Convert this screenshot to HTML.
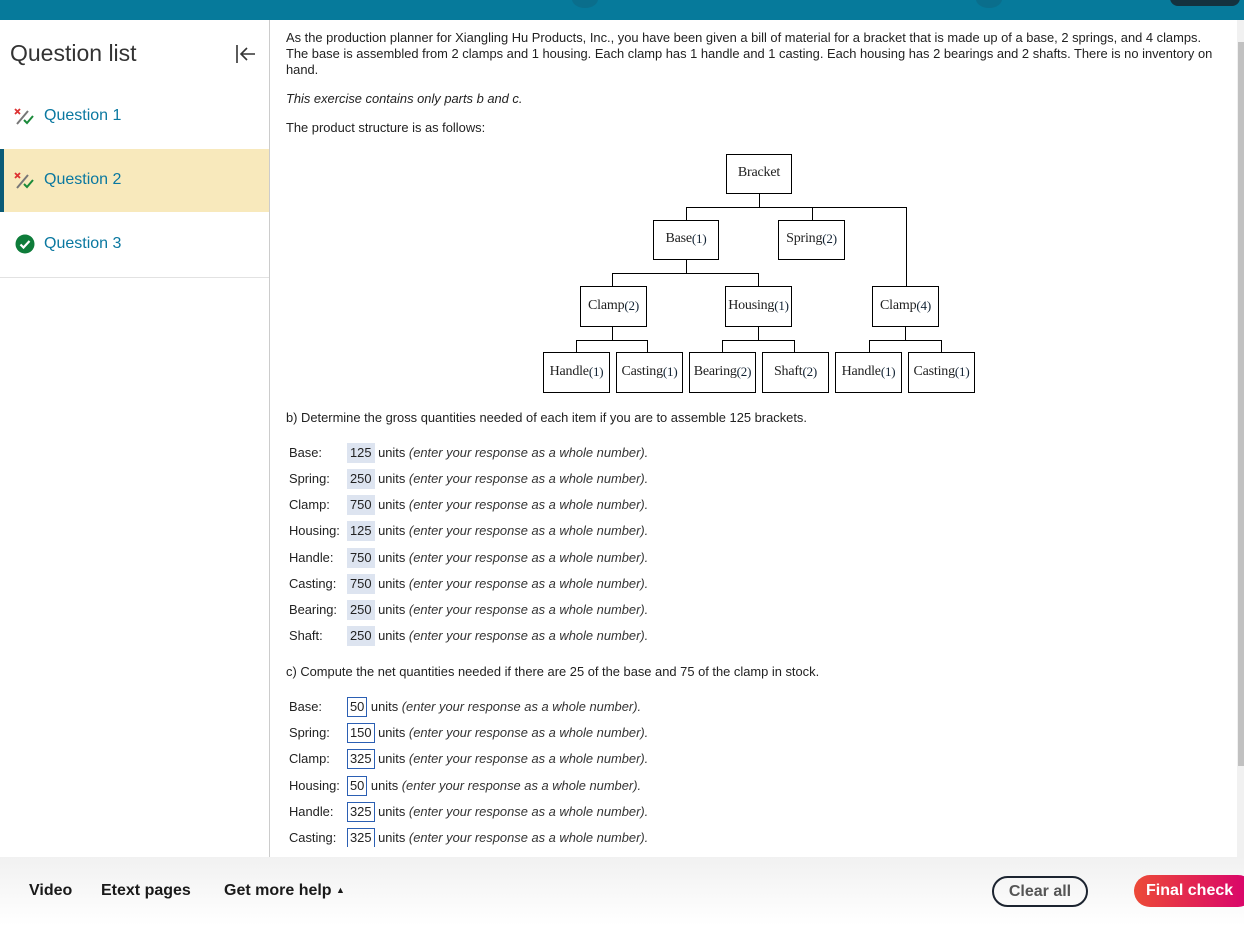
<!DOCTYPE html>
<html><head><meta charset="utf-8"><style>
*{margin:0;padding:0;box-sizing:border-box}
body{width:1244px;height:926px;overflow:hidden;background:#fff;font-family:"Liberation Sans",Arial,sans-serif;position:relative;color:#222}
.abs{position:absolute}
.top{left:0;top:0;width:1244px;height:20px;background:#067a9b}
.left{left:0;top:20px;width:270px;height:837px;border-right:1px solid #ccc;background:#fff}
.q{position:absolute;left:44px;font-size:16px;color:#0a78a0}
.t{font-size:12.9px;line-height:16px;color:#222;white-space:nowrap}
.box{position:absolute;border:1px solid #000;background:#fff;font-family:"Liberation Serif",serif;font-size:14px;display:flex;align-items:center;justify-content:center;padding-bottom:2px;white-space:nowrap;letter-spacing:-0.2px}
.box sub{font-size:13px;vertical-align:-5px;color:#123}
.ln{position:absolute;background:#000}
.row{position:absolute;left:289px;font-size:12.9px;height:20px;line-height:20px;white-space:nowrap}
.row .lb{display:inline-block;width:58px}
.row .in{display:inline-block;background:#dde4f0;padding:0 3px;height:20px;line-height:20px}
.row .bx{display:inline-block;border:1px solid #2b5fb3;padding:0 2px;height:20px;line-height:18px}
.row i{color:#333}
.foot{left:0;top:857px;width:1244px;height:69px;background:linear-gradient(#f1f1f1,#fff)}
.fl{position:absolute;top:882px;font-size:16px;font-weight:bold;color:#1a1a1a}
</style></head><body>
<div class="abs top"></div>
<div class="abs" style="left:572px;top:-10px;width:26px;height:18px;background:#0a6e8c;border-radius:50%"></div>
<div class="abs" style="left:976px;top:-10px;width:26px;height:18px;background:#0a6e8c;border-radius:50%"></div>
<div class="abs" style="left:1170px;top:-10px;width:70px;height:16px;background:#14323f;border-radius:8px"></div>
<div class="abs left">
 <div class="abs" style="left:10px;top:20px;font-size:23px;color:#333">Question list</div>
 <svg class="abs" style="left:234px;top:22px" width="24" height="24" viewBox="0 0 24 24"><path d="M3 3v18M21 12H7M13 6l-6 6 6 6" stroke="#333" stroke-width="1.6" fill="none"/></svg>
 <svg class="abs" style="left:13px;top:87px" width="22" height="20" viewBox="0 0 22 20"><path d="M2 2l5 5M7 2l-5 5" stroke="#d33" stroke-width="1.8"/><path d="M4 17L15 4" stroke="#777" stroke-width="2"/><path d="M11 13l3 3 6-7" stroke="#1a8a3a" stroke-width="2" fill="none"/></svg>
 <div class="q" style="top:87px">Question 1</div>
 <div class="abs" style="left:0;top:129px;width:269px;height:63px;background:#f8e9bc"></div>
 <div class="abs" style="left:0;top:129px;width:4px;height:63px;background:#0b5b77"></div>
 <svg class="abs" style="left:13px;top:151px" width="22" height="20" viewBox="0 0 22 20"><path d="M2 2l5 5M7 2l-5 5" stroke="#d33" stroke-width="1.8"/><path d="M4 17L15 4" stroke="#777" stroke-width="2"/><path d="M11 13l3 3 6-7" stroke="#1a8a3a" stroke-width="2" fill="none"/></svg>
 <div class="q" style="top:151px">Question 2</div>
 <svg class="abs" style="left:15px;top:214px" width="20" height="20" viewBox="0 0 20 20"><circle cx="10" cy="10" r="9.5" fill="#0e7c3a"/><path d="M5.5 10.5l3 3 6-6.5" stroke="#fff" stroke-width="2.2" fill="none"/></svg>
 <div class="q" style="top:215px">Question 3</div>
 <div class="abs" style="left:0;top:257px;width:269px;height:1px;background:#e2e2e2"></div>
</div>
<div class="abs" style="left:1237px;top:20px;width:7px;height:837px;background:#f1f1f1"></div>
<div class="abs" style="left:1238px;top:42px;width:6px;height:724px;background:#c1c1c1"></div>

<div class="abs t" style="left:286px;top:30px">As the production planner for Xiangling Hu Products, Inc., you have been given a bill of material for a bracket that is made up of a base, 2 springs, and 4 clamps.</div>
<div class="abs t" style="left:286px;top:46px">The base is assembled from 2 clamps and 1 housing. Each clamp has 1 handle and 1 casting. Each housing has 2 bearings and 2 shafts. There is no inventory on</div>
<div class="abs t" style="left:286px;top:62px">hand.</div>
<div class="abs t" style="left:286px;top:91px;font-style:italic">This exercise contains only parts b and c.</div>
<div class="abs t" style="left:286px;top:120px">The product structure is as follows:</div>

<!-- tree -->
<div class="ln" style="left:759px;top:194px;width:1px;height:13px"></div>
<div class="ln" style="left:686px;top:207px;width:221px;height:1px"></div>
<div class="ln" style="left:686px;top:207px;width:1px;height:13px"></div>
<div class="ln" style="left:812px;top:207px;width:1px;height:13px"></div>
<div class="ln" style="left:906px;top:207px;width:1px;height:79px"></div>
<div class="ln" style="left:686px;top:260px;width:1px;height:13px"></div>
<div class="ln" style="left:612px;top:273px;width:147px;height:1px"></div>
<div class="ln" style="left:612px;top:273px;width:1px;height:13px"></div>
<div class="ln" style="left:758px;top:273px;width:1px;height:13px"></div>
<div class="ln" style="left:612px;top:327px;width:1px;height:13px"></div>
<div class="ln" style="left:576px;top:340px;width:72px;height:1px"></div>
<div class="ln" style="left:576px;top:340px;width:1px;height:12px"></div>
<div class="ln" style="left:647px;top:340px;width:1px;height:12px"></div>
<div class="ln" style="left:758px;top:327px;width:1px;height:13px"></div>
<div class="ln" style="left:722px;top:340px;width:73px;height:1px"></div>
<div class="ln" style="left:722px;top:340px;width:1px;height:12px"></div>
<div class="ln" style="left:794px;top:340px;width:1px;height:12px"></div>
<div class="ln" style="left:905px;top:327px;width:1px;height:13px"></div>
<div class="ln" style="left:869px;top:340px;width:73px;height:1px"></div>
<div class="ln" style="left:869px;top:340px;width:1px;height:12px"></div>
<div class="ln" style="left:941px;top:340px;width:1px;height:12px"></div>
<div class="box" style="left:726px;top:154px;width:66px;height:40px">Bracket</div>
<div class="box" style="left:653px;top:220px;width:66px;height:40px">Base<sub>(1)</sub></div>
<div class="box" style="left:778px;top:220px;width:67px;height:40px">Spring<sub>(2)</sub></div>
<div class="box" style="left:580px;top:286px;width:67px;height:41px">Clamp<sub>(2)</sub></div>
<div class="box" style="left:725px;top:286px;width:67px;height:41px">Housing<sub>(1)</sub></div>
<div class="box" style="left:872px;top:286px;width:67px;height:41px">Clamp<sub>(4)</sub></div>
<div class="box" style="left:543px;top:352px;width:67px;height:41px">Handle<sub>(1)</sub></div>
<div class="box" style="left:616px;top:352px;width:67px;height:41px">Casting<sub>(1)</sub></div>
<div class="box" style="left:689px;top:352px;width:67px;height:41px">Bearing<sub>(2)</sub></div>
<div class="box" style="left:762px;top:352px;width:67px;height:41px">Shaft<sub>(2)</sub></div>
<div class="box" style="left:835px;top:352px;width:67px;height:41px">Handle<sub>(1)</sub></div>
<div class="box" style="left:908px;top:352px;width:67px;height:41px">Casting<sub>(1)</sub></div>

<div class="abs t" style="left:286px;top:410px">b) Determine the gross quantities needed of each item if you are to assemble 125 brackets.</div>
<div class="row" style="top:443px"><span class="lb">Base:</span><span class="in">125</span> units <i>(enter your response as a whole number).</i></div>
<div class="row" style="top:469px"><span class="lb">Spring:</span><span class="in">250</span> units <i>(enter your response as a whole number).</i></div>
<div class="row" style="top:495px"><span class="lb">Clamp:</span><span class="in">750</span> units <i>(enter your response as a whole number).</i></div>
<div class="row" style="top:521px"><span class="lb">Housing:</span><span class="in">125</span> units <i>(enter your response as a whole number).</i></div>
<div class="row" style="top:548px"><span class="lb">Handle:</span><span class="in">750</span> units <i>(enter your response as a whole number).</i></div>
<div class="row" style="top:574px"><span class="lb">Casting:</span><span class="in">750</span> units <i>(enter your response as a whole number).</i></div>
<div class="row" style="top:600px"><span class="lb">Bearing:</span><span class="in">250</span> units <i>(enter your response as a whole number).</i></div>
<div class="row" style="top:626px"><span class="lb">Shaft:</span><span class="in">250</span> units <i>(enter your response as a whole number).</i></div>

<div class="abs t" style="left:286px;top:664px">c) Compute the net quantities needed if there are 25 of the base and 75 of the clamp in stock.</div>
<div class="abs" style="left:270px;top:690px;width:967px;height:157px;overflow:hidden">
<div class="row" style="left:19px;top:7px"><span class="lb">Base:</span><span class="bx">50</span> units <i>(enter your response as a whole number).</i></div>
<div class="row" style="left:19px;top:33px"><span class="lb">Spring:</span><span class="bx">150</span> units <i>(enter your response as a whole number).</i></div>
<div class="row" style="left:19px;top:59px"><span class="lb">Clamp:</span><span class="bx">325</span> units <i>(enter your response as a whole number).</i></div>
<div class="row" style="left:19px;top:86px"><span class="lb">Housing:</span><span class="bx">50</span> units <i>(enter your response as a whole number).</i></div>
<div class="row" style="left:19px;top:112px"><span class="lb">Handle:</span><span class="bx">325</span> units <i>(enter your response as a whole number).</i></div>
<div class="row" style="left:19px;top:138px"><span class="lb">Casting:</span><span class="bx">325</span> units <i>(enter your response as a whole number).</i></div>
</div>

<div class="abs foot"></div>
<div class="fl" style="left:29px">Video</div>
<div class="fl" style="left:101px">Etext pages</div>
<div class="fl" style="left:224px">Get more help <span style="font-size:9px;vertical-align:2px">▲</span></div>
<div class="abs" style="left:992px;top:876px;width:96px;height:31px;border:2px solid #1c2430;border-radius:16px;font-size:16px;font-weight:bold;color:#555;text-align:center;line-height:27px">Clear all</div>
<div class="abs" style="left:1134px;top:875px;width:120px;height:32px;border-radius:16px;background:linear-gradient(90deg,#ec4a37,#d8006e);font-size:16px;font-weight:bold;color:#fff;line-height:32px;padding-left:12px">Final check</div>
</body></html>
